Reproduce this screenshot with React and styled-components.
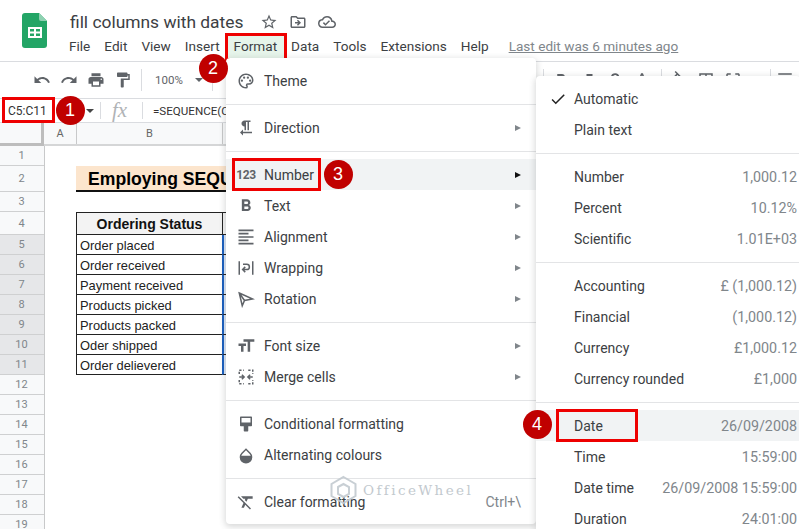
import React from 'react'
import styled, { createGlobalStyle } from 'styled-components'
import {
  MdUndo, MdRedo, MdPrint, MdFormatPaint, MdStarBorder, MdOutlineDriveFileMove, MdOutlineCloudDone,
  MdOutlinePalette, MdFormatTextdirectionRToL, MdFormatBold, MdFormatAlignLeft, MdFormatSize,
  MdFormatClear, MdCheck, MdFormatItalic, MdStrikethroughS, MdFormatColorText, MdFormatColorFill,
  MdBorderAll, MdCropFree,
} from 'react-icons/md'

const Global = createGlobalStyle`
  html, body { margin: 0; padding: 0; background: #fff; overflow: hidden; }
  * { box-sizing: border-box; }
`

const Page = styled.div`
  position: relative;
  width: 799px;
  height: 529px;
  overflow: hidden;
  background: #fff;
  font-family: Roboto, "Liberation Sans", sans-serif;
  color: #3c4043;
`

/* header */
const Header = styled.header`
  height: 62px;
  display: flex;
  padding-left: 22px;
  border-bottom: 1px solid #dadce0;
`
const Logo = styled.svg`
  width: 25px;
  height: 35px;
  margin-top: 13px;
  flex: none;
`
const TitleCol = styled.div`
  margin-left: 22px;
  display: flex;
  flex-direction: column;
  padding-top: 10px;
`
const TitleRow = styled.div`
  display: flex;
  align-items: center;
  height: 23px;
  color: #5f6368;
`
const Title = styled.span`
  font-size: 17.4px;
  color: #3c4043;
  width: 190px;
  margin-left: 1px;
`
const TitleIcons = styled.div`
  display: flex;
  gap: 11px;
  font-size: 18px;
`
const MenuBar = styled.nav`
  display: flex;
  height: 28px;
  padding-bottom: 2px;
  align-items: center;
  font-size: 13.6px;
`
const MenuItem = styled.span`
  margin-right: 14px;
  white-space: nowrap;
`
const FormatItem = styled.span`
  height: 28px;
  display: flex;
  align-items: center;
  padding: 0 10px 2px 9px;
  margin: 0 4px -2px -9px;
  background: #e6f4ea;
  outline: 3px solid #ee0000;
  outline-offset: -3px;
`
const LastEdit = styled.span`
  color: #80868b;
  text-decoration: underline;
  margin-left: 6px;
  white-space: nowrap;
`

/* toolbar */
const Toolbar = styled.div`
  height: 36px;
  display: flex;
  align-items: center;
  padding-left: 33px;
  color: #5f6368;
  font-size: 18px;
`
const ToolGroup = styled.div`
  display: flex;
  gap: 9px;
`
const ToolDivider = styled.div`
  width: 1px;
  height: 22px;
  background: #dadce0;
  flex: none;
  margin: 0 ${p => p.$r ?? 8}px 0 ${p => p.$l ?? 9}px;
`
const Zoom = styled.span`
  font-size: 11.5px;
  margin-left: 5px;
  width: 40px;
`
const Caret = styled.span`
  width: 0;
  height: 0;
  border-left: 4px solid transparent;
  border-right: 4px solid transparent;
  border-top: 4px solid ${p => p.$dark ? '#444' : '#5f6368'};
  flex: none;
`
const Spacer = styled.div`
  width: 322px;
  flex: none;
`

/* formula bar */
const FormulaBar = styled.div`
  height: 25px;
  display: flex;
  align-items: center;
  border-top: 1px solid #dadce0;
  border-bottom: 1px solid #dadce0;
  background: #fff;
`
const NameBox = styled.div`
  width: 86px;
  padding-left: 8px;
  font-size: 12px;
  color: #333;
`
const BarDivider = styled.div`
  width: 1px;
  height: 17px;
  background: #dadce0;
  margin-left: ${p => p.$l}px;
`
const Fx = styled.span`
  font-family: "Liberation Serif", serif;
  font-style: italic;
  font-size: 21px;
  color: #b0b3b6;
  margin-left: 11px;
  width: 30px;
`
const Formula = styled.span`
  font-size: 11.6px;
  margin-left: 10px;
  color: #333;
  white-space: nowrap;
`

/* sheet */
const ColHeaders = styled.div`
  height: 23px;
  display: flex;
  background: #f8f9fa;
  font-size: 11px;
  color: #666;
  border-bottom: 2px solid #d5d6d7;
`
const Corner = styled.div`
  width: 44px;
  margin-bottom: -2px;
  background: #f8f9fa;
  border-right: 3px solid #bdbdbd;
  border-bottom: 3px solid #bdbdbd;
`
const ColHead = styled.div`
  width: ${p => p.$w}px;
  display: flex;
  align-items: center;
  justify-content: center;
  border-right: 1px solid #c8c9ca;
`
const Sheet = styled.div`
  display: flex;
  height: 383px;
  overflow: hidden;
`
const RowHeads = styled.div`
  width: 45px;
  flex: none;
  border-right: 1px solid #c8c9ca;
`
const RowNum = styled.div`
  height: ${p => p.$h ?? 20}px;
  display: flex;
  align-items: center;
  justify-content: center;
  padding-right: 1px;
  font-size: 11px;
  color: #80868b;
  background: ${p => p.$sel ? '#e6e7e9' : '#f8f9fa'};
  border-bottom: 1px solid #cfd0d1;
`
const SheetBody = styled.div`
  padding: 20px 0 0 31px;
  flex: 1;
`
const Heading = styled.div`
  width: 460px;
  height: 26px;
  display: flex;
  align-items: center;
  padding: 2px 0 0 12px;
  background: #fce5cd;
  border-bottom: 2px solid #111;
  font: bold 17.6px "Liberation Sans", Arial, sans-serif;
  color: #000;
  white-space: nowrap;
`
const Table = styled.div`
  margin-top: 20px;
  display: grid;
  grid-template-columns: 146px 147px;
  grid-template-rows: 22px repeat(7, 20px);
  font: 12.9px "Liberation Sans", Arial, sans-serif;
  color: #222;
  border-left: 1px solid #222;
  border-top: 1px solid #222;
  width: 300px;
`
const HeadCell = styled.div`
  font-weight: bold;
  font-size: 14px;
  color: #111;
  background: #f3f3f3;
  display: flex;
  align-items: center;
  justify-content: center;
  border-right: 1px solid #222;
  border-bottom: 1px solid #222;
`
const Cell = styled.div`
  padding: 2px 0 0 3px;
  display: flex;
  align-items: center;
  border-right: 1px solid #222;
  border-bottom: 1px solid #222;
  white-space: nowrap;
`
const DateCell = styled.div`
  background: #dbe7f8;
  border-left: 2px solid #1a5fc0;
  margin-left: -1px;
  border-bottom: 1px solid #222;
`

/* menus */
const Menu = styled.div`
  position: absolute;
  left: ${p => p.$left}px;
  top: ${p => p.$top}px;
  width: ${p => p.$w}px;
  padding: 7px 0;
  background: #fff;
  border-radius: 4px;
  box-shadow: 0 2px 6px 1px rgba(60, 64, 67, .2);
  font-size: 14px;
  color: #3c4043;
`
const Row = styled.div`
  height: 31px;
  display: flex;
  align-items: center;
  padding: 0 15px 0 11px;
  background: ${p => p.$active ? '#f1f3f4' : 'transparent'};
`
const SubRow = styled(Row)`
  padding: 0 3px 0 ${p => p.$check ? 13 : 38}px;
`
const Sep = styled.div`
  height: 1px;
  background: #e3e4e6;
  margin: 8px 0 7px;
`
const IconBox = styled.span`
  width: 18px;
  height: 18px;
  font-size: 18px;
  flex: none;
  margin-right: 9px;
  color: #5f6368;
  display: flex;
  align-items: center;
  justify-content: center;
  & svg { flex: none; }
`
const NumIcon = styled.span`
  font-size: 12px;
  font-weight: 700;
  letter-spacing: -0.4px;
  color: #5f6368;
`
const Label = styled.span`
  white-space: nowrap;
`
const Arrow = styled.span`
  margin-left: auto;
  width: 0;
  height: 0;
  border-top: 3.5px solid transparent;
  border-bottom: 3.5px solid transparent;
  border-left: 6px solid ${p => p.$active ? '#111' : '#80868b'};
`
const Value = styled.span`
  margin-left: auto;
  color: #80868b;
  white-space: nowrap;
`
const SubValue = styled(Value)`
  font-size: 14.3px;
`
const CheckMark = styled.span`
  width: 25px;
  font-size: 18px;
  display: flex;
  color: #222;
`

/* annotations */
const Badge = styled.div`
  position: absolute;
  left: ${p => p.$x - 14.5}px;
  top: ${p => p.$y - 14.5}px;
  width: 29px;
  height: 29px;
  border-radius: 50%;
  background: #c00000;
  color: #fff;
  font: 18px "Liberation Sans", Arial, sans-serif;
  display: flex;
  align-items: center;
  justify-content: center;
`
const RedBox = styled.div`
  position: absolute;
  left: ${p => p.$x}px;
  top: ${p => p.$y}px;
  width: ${p => p.$w}px;
  height: ${p => p.$h}px;
  border: 3px solid #ee0000;
`
const Watermark = styled.div`
  position: absolute;
  left: 329px;
  top: 475px;
  height: 30px;
  display: flex;
  align-items: center;
  gap: 5px;
  font: 13.5px "DejaVu Serif", serif;
  letter-spacing: 2.4px;
  color: #bcc4ca;
  opacity: .9;
`

const rowHeights = [20, 26, 20, 23, ...Array(15).fill(20)]
const orders = ['Order placed', 'Order received', 'Payment received', 'Products picked', 'Products packed', 'Oder shipped', 'Order delievered']

const MergeIcon = () => (
  <svg width="18" height="18" viewBox="0 0 24 24" fill="none" stroke="currentColor" strokeWidth="2">
    <path d="M3 8V3h6M15 3h6v5M3 16v5h6M15 21h6v-5" strokeDasharray="3 2" />
    <path d="M3 12h6M6.500 9l3 3-3 3M21 12h-6M17.500 9l-3 3 3 3" />
  </svg>
)
const WrapIcon = () => (
  <svg width="18" height="18" viewBox="0 0 24 24" fill="none" stroke="currentColor" strokeWidth="2">
    <path d="M3 3v18M21 3v18M8 7h5a3.500 3.500 0 0 1 0 7H8M11 10.500L7.500 14l3.500 3.500" />
  </svg>
)
const RotateIcon = () => (
  <svg width="18" height="18" viewBox="0 0 24 24" fill="none" stroke="currentColor" strokeWidth="2">
    <path d="M3 4l18 8-11 2-3 7zM3 4l7 10" />
  </svg>
)
const CondIcon = () => (
  <svg width="18" height="18" viewBox="0 0 24 24" fill="currentColor">
    <path d="M5 2h14a1 1 0 0 1 1 1v11a1 1 0 0 1-1 1h-4v6a1 1 0 0 1-1 1h-4a1 1 0 0 1-1-1v-6H5a1 1 0 0 1-1-1V3a1 1 0 0 1 1-1zm1 2v6h12V4z" fillRule="evenodd" />
  </svg>
)
const DropIcon = () => (
  <svg width="18" height="18" viewBox="0 0 24 24" fill="currentColor">
    <path d="M12 3l6 6a8.400 8.400 0 1 1-12 0zm0 2.800L7.400 10.400a6.500 6.500 0 0 0-1.700 2.600h12.600a6.500 6.500 0 0 0-1.700-2.600z" fillRule="evenodd" />
  </svg>
)

const App = () => (
  <Page>
    <Global />
    <Header>
      <Logo viewBox="0 0 25 35">
        <path d="M3 0h14l8 8v24a3 3 0 0 1-3 3H3a3 3 0 0 1-3-3V3a3 3 0 0 1 3-3z" fill="#23a566" />
        <path d="M17 0l8 8h-6a2 2 0 0 1-2-2z" fill="#8ed1b1" />
        <path d="M6 14h14v11H6zm2 2v2.500h4V16zm6 0v2.500h4V16zM8 20.500V23h4v-2.500zm6 0V23h4v-2.500z" fill="#fff" fillRule="evenodd" />
      </Logo>
      <TitleCol>
        <TitleRow>
          <Title>fill columns with dates</Title>
          <TitleIcons>
            <MdStarBorder />
            <MdOutlineDriveFileMove />
            <MdOutlineCloudDone />
          </TitleIcons>
        </TitleRow>
        <MenuBar>
          <MenuItem>File</MenuItem>
          <MenuItem>Edit</MenuItem>
          <MenuItem>View</MenuItem>
          <MenuItem>Insert</MenuItem>
          <FormatItem>Format</FormatItem>
          <MenuItem>Data</MenuItem>
          <MenuItem>Tools</MenuItem>
          <MenuItem>Extensions</MenuItem>
          <MenuItem>Help</MenuItem>
          <LastEdit>Last edit was 6 minutes ago</LastEdit>
        </MenuBar>
      </TitleCol>
    </Header>

    <Toolbar>
      <ToolGroup>
        <MdUndo />
        <MdRedo />
        <MdPrint />
        <MdFormatPaint />
      </ToolGroup>
      <ToolDivider />
      <Zoom>100%</Zoom>
      <Caret />
      <ToolDivider />
      <Spacer />
      <ToolDivider $l={0} />
      <ToolGroup>
        <MdFormatBold />
        <MdFormatItalic />
        <MdStrikethroughS />
        <MdFormatColorText />
      </ToolGroup>
      <ToolDivider $l={10} />
      <ToolGroup>
        <MdFormatColorFill />
        <MdBorderAll />
        <MdCropFree />
      </ToolGroup>
      <ToolDivider $l={28} $r={5} />
      <MdFormatAlignLeft />
    </Toolbar>

    <FormulaBar>
      <NameBox>C5:C11</NameBox>
      <Caret $dark />
      <BarDivider $l={6} />
      <Fx>fx</Fx>
      <BarDivider $l={0} />
      <Formula>=SEQUENCE(C</Formula>
    </FormulaBar>

    <ColHeaders>
      <Corner />
      <ColHead $w={33}>A</ColHead>
      <ColHead $w={146}>B</ColHead>
    </ColHeaders>

    <Sheet>
      <RowHeads>
        {rowHeights.map((h, i) => (
          <RowNum key={i} $h={h} $sel={i >= 4 && i <= 10}>{i + 1}</RowNum>
        ))}
      </RowHeads>
      <SheetBody>
        <Heading>Employing SEQUENCE Function</Heading>
        <Table>
          <HeadCell>Ordering Status</HeadCell>
          <HeadCell />
          {orders.map(o => (
            <React.Fragment key={o}>
              <Cell>{o}</Cell>
              <DateCell />
            </React.Fragment>
          ))}
        </Table>
      </SheetBody>
    </Sheet>

    <Menu $left={226} $top={58} $w={310}>
      <Row><IconBox><MdOutlinePalette /></IconBox><Label>Theme</Label></Row>
      <Sep />
      <Row><IconBox><MdFormatTextdirectionRToL /></IconBox><Label>Direction</Label><Arrow /></Row>
      <Sep />
      <Row $active><IconBox><NumIcon>123</NumIcon></IconBox><Label>Number</Label><Arrow $active /></Row>
      <Row><IconBox><MdFormatBold size={20} /></IconBox><Label>Text</Label><Arrow /></Row>
      <Row><IconBox><MdFormatAlignLeft size={20} /></IconBox><Label>Alignment</Label><Arrow /></Row>
      <Row><IconBox><WrapIcon /></IconBox><Label>Wrapping</Label><Arrow /></Row>
      <Row><IconBox><RotateIcon /></IconBox><Label>Rotation</Label><Arrow /></Row>
      <Sep />
      <Row><IconBox><MdFormatSize size={20} /></IconBox><Label>Font size</Label><Arrow /></Row>
      <Row><IconBox><MergeIcon /></IconBox><Label>Merge cells</Label><Arrow /></Row>
      <Sep />
      <Row><IconBox><CondIcon /></IconBox><Label>Conditional formatting</Label></Row>
      <Row><IconBox><DropIcon /></IconBox><Label>Alternating colours</Label></Row>
      <Sep />
      <Row><IconBox><MdFormatClear size={20} /></IconBox><Label>Clear formatting</Label><Value>Ctrl+\</Value></Row>
    </Menu>

    <Menu $left={536} $top={76} $w={264}>
      <SubRow $check><CheckMark><MdCheck /></CheckMark><Label>Automatic</Label></SubRow>
      <SubRow><Label>Plain text</Label></SubRow>
      <Sep />
      <SubRow><Label>Number</Label><SubValue>1,000.12</SubValue></SubRow>
      <SubRow><Label>Percent</Label><SubValue>10.12%</SubValue></SubRow>
      <SubRow><Label>Scientific</Label><SubValue>1.01E+03</SubValue></SubRow>
      <Sep />
      <SubRow><Label>Accounting</Label><SubValue>£ (1,000.12)</SubValue></SubRow>
      <SubRow><Label>Financial</Label><SubValue>(1,000.12)</SubValue></SubRow>
      <SubRow><Label>Currency</Label><SubValue>£1,000.12</SubValue></SubRow>
      <SubRow><Label>Currency rounded</Label><SubValue>£1,000</SubValue></SubRow>
      <Sep />
      <SubRow $active><Label>Date</Label><SubValue>26/09/2008</SubValue></SubRow>
      <SubRow><Label>Time</Label><SubValue>15:59:00</SubValue></SubRow>
      <SubRow><Label>Date time</Label><SubValue>26/09/2008 15:59:00</SubValue></SubRow>
      <SubRow><Label>Duration</Label><SubValue>24:01:00</SubValue></SubRow>
    </Menu>

    <Watermark>
      <svg width="29" height="30" viewBox="0 0 29 30" fill="none" stroke="#c3cad0" strokeWidth="2">
        <path d="M14.500 2l12 7v12l-12 7-12-7V9zM9 12l5.500-3 5.500 3v7l-5.500 3L9 19z" />
      </svg>
      OfficeWheel
    </Watermark>

    <RedBox $x={2} $y={97} $w={53} $h={26} />
    <RedBox $x={232} $y={158} $w={89} $h={33} />
    <RedBox $x={556} $y={409} $w={82} $h={33} />
    <Badge $x={70} $y={110}>1</Badge>
    <Badge $x={213} $y={68}>2</Badge>
    <Badge $x={338} $y={174}>3</Badge>
    <Badge $x={537} $y={424}>4</Badge>
  </Page>
)

export default App
